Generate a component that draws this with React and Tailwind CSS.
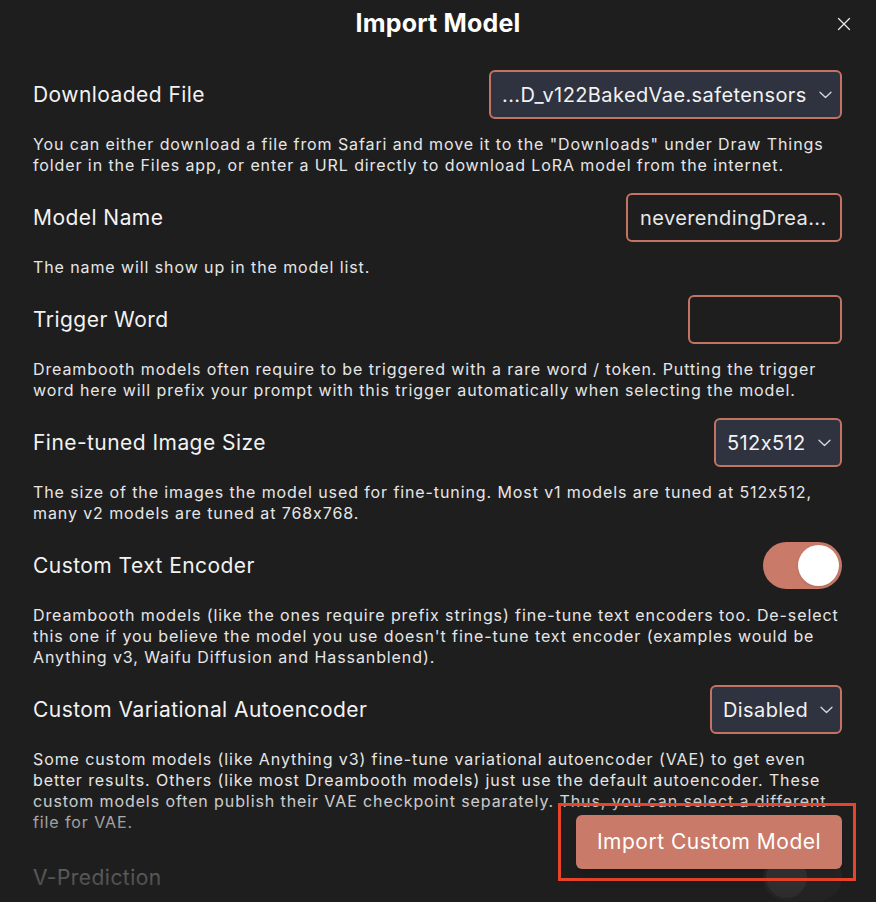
import React from "react";
import { X } from "lucide-react";

const font = { fontFamily: "Inter, 'Open Sans', sans-serif" };

const Chevron = () => (
  <svg width="13" height="8" viewBox="0 0 13 8" fill="none" className="text-[#d8d8dc] shrink-0">
    <path d="M1 1.2 6.5 6.5 12 1.2" stroke="currentColor" strokeWidth="1.3" strokeLinecap="round" strokeLinejoin="round" />
  </svg>
);

const Select = ({ value, className = "" }) => (
  <div
    className={`h-full flex items-center justify-between gap-3 pl-[11px] pr-[13px] rounded-md border-2 border-[#c27362] bg-[#2f3340] text-[20px] tracking-[0.4px] text-[#f2f2f2] ${className}`}
  >
    <span className="whitespace-nowrap">{value}</span>
    <Chevron />
  </div>
);

const Input = ({ value, className = "" }) => (
  <div
    className={`h-full flex items-center px-[12px] rounded-md border-2 border-[#c27362] bg-[#1e1e1e] text-[20px] tracking-[0.4px] text-[#e8e8e8] ${className}`}
  >
    <span className="whitespace-nowrap">{value}</span>
  </div>
);

const Toggle = ({ on }) =>
  on ? (
    <div className="w-[79px] h-[47px] rounded-full bg-[#c97a68] flex items-center justify-end pr-[3px]">
      <div className="w-[41px] h-[41px] rounded-full bg-white shadow" />
    </div>
  ) : (
    <div className="w-[79px] h-[47px] rounded-full bg-[#39393d] flex items-center justify-start pl-[3px]">
      <div className="w-[41px] h-[41px] rounded-full bg-[#6a6a6e]" />
    </div>
  );

const Section = ({ label, control, desc }) => (
  <div className="mb-[17px]">
    <div className="h-[49px] flex items-center justify-between">
      <span className="text-[21px] text-[#f2f2f2] tracking-[0.45px]">{label}</span>
      {control}
    </div>
    {desc && (
      <p className="mt-[15px] text-[16px] leading-[21px] text-[#e6e6e6] tracking-[0.9px]">
        {desc}
      </p>
    )}
  </div>
);

export default function App() {
  return (
    <div
      className="relative w-[876px] h-[902px] overflow-hidden bg-[#1e1e1e] [font-feature-settings:'calt'_0]"
      style={font}
    >
      <div className="relative h-[48px] flex items-center justify-center">
        <h1 className="text-[25px] font-bold text-white tracking-[0.2px]">Import Model</h1>
        <button className="absolute right-[21px] top-[13px] text-[#e8e8e8]">
          <X size={22} strokeWidth={1.4} />
        </button>
      </div>

      <div className="pt-[22px] pl-[33px] pr-[34px]">
        <Section
          label="Downloaded File"
          control={<Select value="...D_v122BakedVae.safetensors" className="w-[353px]" />}
          desc={'You can either download a file from Safari and move it to the "Downloads" under Draw Things folder in the Files app, or enter a URL directly to download LoRA model from the internet.'}
        />
        <Section
          label="Model Name"
          control={<Input value="neverendingDrea..." className="w-[216px]" />}
          desc="The name will show up in the model list."
        />
        <Section
          label="Trigger Word"
          control={<Input value="" className="w-[154px]" />}
          desc="Dreambooth models often require to be triggered with a rare word / token. Putting the trigger word here will prefix your prompt with this trigger automatically when selecting the model."
        />
        <Section
          label="Fine-tuned Image Size"
          control={<Select value="512x512" className="w-[128px]" />}
          desc="The size of the images the model used for fine-tuning. Most v1 models are tuned at 512x512, many v2 models are tuned at 768x768."
        />
        <Section
          label="Custom Text Encoder"
          control={<Toggle on />}
          desc="Dreambooth models (like the ones require prefix strings) fine-tune text encoders too. De-select this one if you believe the model you use doesn't fine-tune text encoder (examples would be Anything v3, Waifu Diffusion and Hassanblend)."
        />
        <Section
          label="Custom Variational Autoencoder"
          control={<Select value="Disabled" className="w-[132px]" />}
          desc="Some custom models (like Anything v3) fine-tune variational autoencoder (VAE) to get even better results. Others (like most Dreambooth models) just use the default autoencoder. These custom models often publish their VAE checkpoint separately. Thus, you can select a different file for VAE."
        />
        <div className="pt-[3px]">
          <Section label="V-Prediction" control={<Toggle on={false} />} />
        </div>
      </div>

      <div className="absolute left-0 right-0 bottom-0 h-[112px] bg-linear-to-b from-[#1e1e1e]/0 via-[#1e1e1e]/60 to-[#1e1e1e]/85 pointer-events-none" />

      <div className="absolute left-[558px] top-[803px] w-[298px] h-[78px] border-[3px] border-[#e8432b]" />
      <button className="absolute left-[576px] top-[815px] w-[266px] h-[54px] rounded-md bg-[#c97a68] text-white text-[21px] tracking-[0.5px] shadow-lg">
        Import Custom Model
      </button>
    </div>
  );
}
